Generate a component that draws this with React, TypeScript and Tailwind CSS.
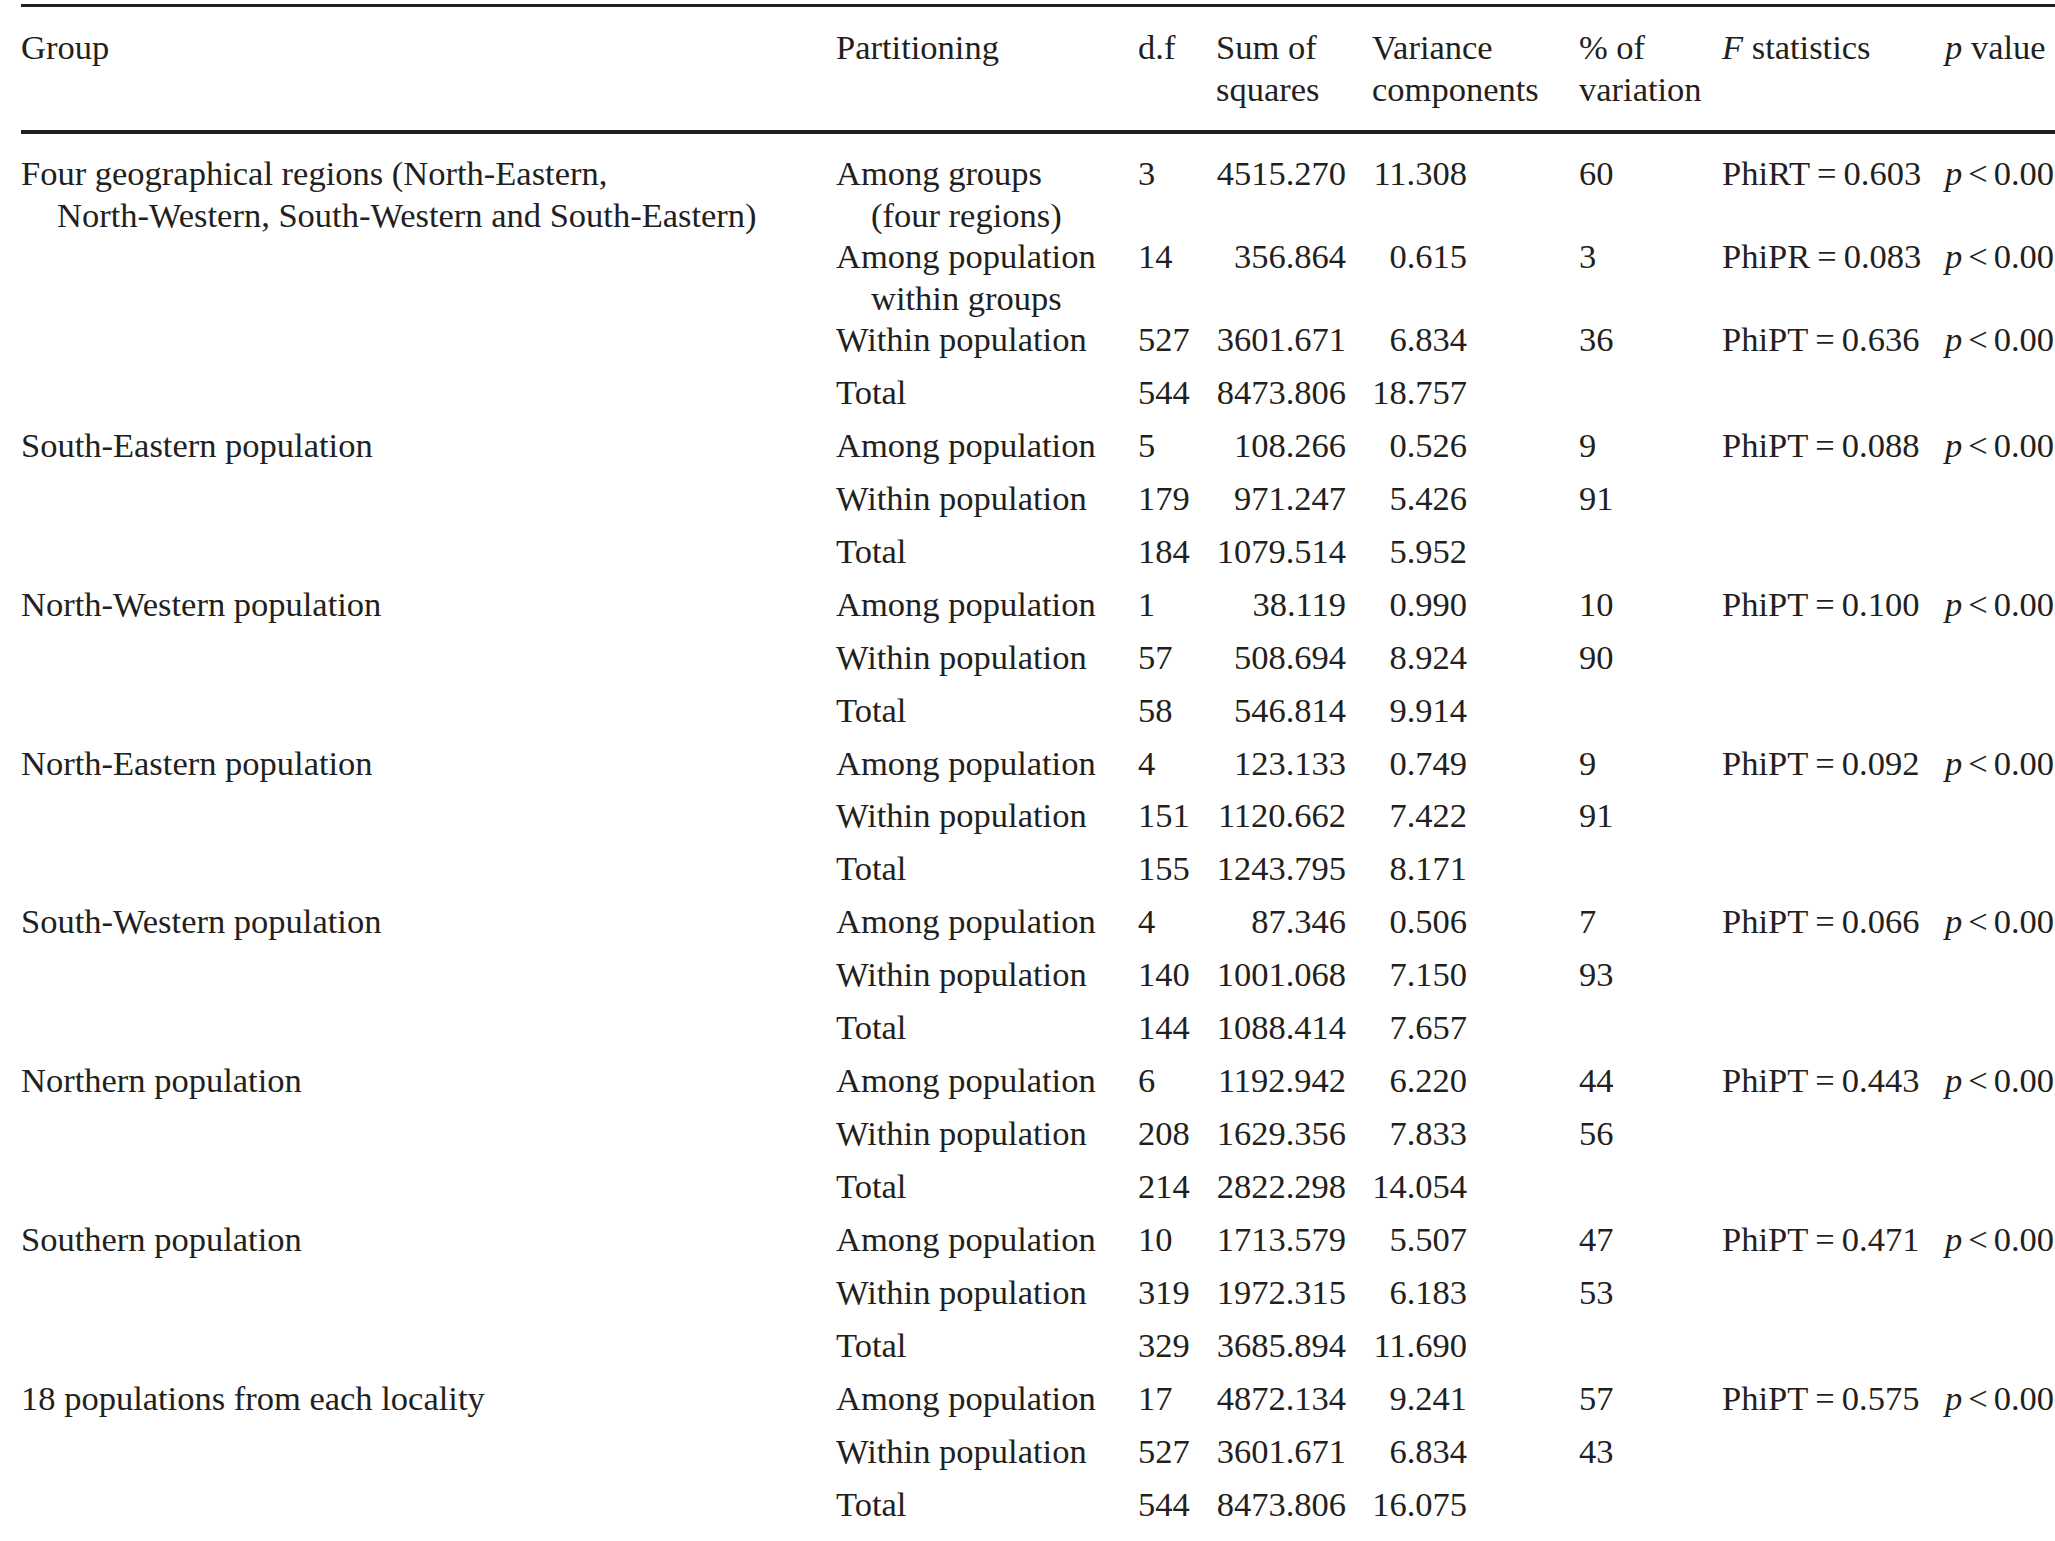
import React from "react";

type Row = {
  group?: React.ReactNode;
  part: React.ReactNode;
  df: string;
  ss: string;
  vc: string;
  pct?: string;
  phi?: string;
  val?: string;
  tight?: boolean;
};

const cols = "grid grid-cols-[815px_302px_78px_156px_207px_143px_223px_1fr]";

const simpleGroup = (
  name: string,
  among: [string, string, string, string, string, string],
  within: [string, string, string, string],
  total: [string, string, string]
): Row[] => [
  {
    group: name,
    part: "Among population",
    df: among[0],
    ss: among[1],
    vc: among[2],
    pct: among[3],
    phi: among[4],
    val: among[5],
  },
  { part: "Within population", df: within[0], ss: within[1], vc: within[2], pct: within[3] },
  { part: "Total", df: total[0], ss: total[1], vc: total[2] },
];

const rows: Row[] = [
  {
    group: (
      <>
        Four geographical regions (North-Eastern,
        <br />
        North-Western, South-Western and South-Eastern)
      </>
    ),
    part: (
      <>
        Among groups
        <br />
        (four regions)
      </>
    ),
    df: "3",
    ss: "4515.270",
    vc: "11.308",
    pct: "60",
    phi: "PhiRT",
    val: "0.603",
    tight: true,
  },
  {
    part: (
      <>
        Among population
        <br />
        within groups
      </>
    ),
    df: "14",
    ss: "356.864",
    vc: "0.615",
    pct: "3",
    phi: "PhiPR",
    val: "0.083",
    tight: true,
  },
  { part: "Within population", df: "527", ss: "3601.671", vc: "6.834", pct: "36", phi: "PhiPT", val: "0.636" },
  { part: "Total", df: "544", ss: "8473.806", vc: "18.757" },
  ...simpleGroup("South-Eastern population", ["5", "108.266", "0.526", "9", "PhiPT", "0.088"], ["179", "971.247", "5.426", "91"], ["184", "1079.514", "5.952"]),
  ...simpleGroup("North-Western population", ["1", "38.119", "0.990", "10", "PhiPT", "0.100"], ["57", "508.694", "8.924", "90"], ["58", "546.814", "9.914"]),
  ...simpleGroup("North-Eastern population", ["4", "123.133", "0.749", "9", "PhiPT", "0.092"], ["151", "1120.662", "7.422", "91"], ["155", "1243.795", "8.171"]),
  ...simpleGroup("South-Western population", ["4", "87.346", "0.506", "7", "PhiPT", "0.066"], ["140", "1001.068", "7.150", "93"], ["144", "1088.414", "7.657"]),
  ...simpleGroup("Northern population", ["6", "1192.942", "6.220", "44", "PhiPT", "0.443"], ["208", "1629.356", "7.833", "56"], ["214", "2822.298", "14.054"]),
  ...simpleGroup("Southern population", ["10", "1713.579", "5.507", "47", "PhiPT", "0.471"], ["319", "1972.315", "6.183", "53"], ["329", "3685.894", "11.690"]),
  ...simpleGroup("18 populations from each locality", ["17", "4872.134", "9.241", "57", "PhiPT", "0.575"], ["527", "3601.671", "6.834", "43"], ["544", "8473.806", "16.075"]),
];

export default function App() {
  return (
    <div
      className="h-screen w-full overflow-hidden bg-white pl-[21px] pt-[4px] text-[34.5px] text-[#231f20]"
      style={{ fontFamily: '"Liberation Serif", "Times New Roman", serif' }}
    >
      <div className="w-[2100px] border-t-[3px] border-[#231f20]">
        {/* header */}
        <div className={`${cols} border-b-[4px] border-[#231f20] pb-[20px] pt-[19px] leading-[42px]`}>
          <div>Group</div>
          <div>Partitioning</div>
          <div>d.f</div>
          <div>
            Sum of
            <br />
            squares
          </div>
          <div>
            Variance
            <br />
            components
          </div>
          <div>
            % of
            <br />
            variation
          </div>
          <div>
            <i>F</i> statistics
          </div>
          <div>
            <i>p</i> value
          </div>
        </div>

        {/* body */}
        <div className="pt-[19px] leading-[41.5px]">
          {rows.map((r, i) => (
            <div key={i} className={`${cols} ${r.tight ? "pb-0" : "pb-[11.45px]"}`}>
              <div className="pl-[36px] indent-[-36px]">{r.group}</div>
              <div className="pl-[35px] indent-[-35px]">{r.part}</div>
              <div>{r.df}</div>
              <div>
                <div className="w-[130px] text-right">{r.ss}</div>
              </div>
              <div>
                <div className="w-[95px] text-right">{r.vc}</div>
              </div>
              <div>{r.pct}</div>
              <div className="whitespace-nowrap">
                {r.phi && (
                  <>
                    {r.phi}
                    <span className="mx-[7px]">=</span>
                    {r.val}
                  </>
                )}
              </div>
              <div className="whitespace-nowrap">
                {r.phi && (
                  <>
                    <i>p</i>
                    <span className="mx-[6px]">&lt;</span>0.001
                  </>
                )}
              </div>
            </div>
          ))}
        </div>
      </div>
    </div>
  );
}
